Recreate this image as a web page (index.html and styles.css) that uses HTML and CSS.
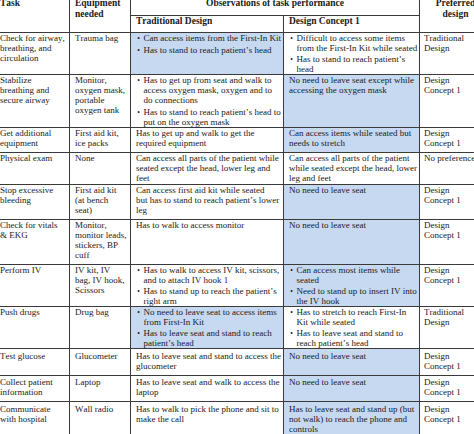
FILE: index.html
```html
<!DOCTYPE html>
<html lang="en">
<head>
<meta charset="utf-8">
<title>Observations of task performance</title>
<link rel="stylesheet" href="styles.css">
</head>
<body>
<div class="obs" role="table">
  <div class="row head-top" role="row">
    <div class="cell th span-rows" role="columnheader">Task</div>
    <div class="cell th span-rows" role="columnheader">Equipment needed</div>
    <div class="cell th span-cols center" role="columnheader">Observations of task performance</div>
    <div class="cell th span-rows pref center" role="columnheader">Preferred design</div>
  </div>
  <div class="row head-sub" role="row">
    <div class="cell th trad" role="columnheader">Traditional Design</div>
    <div class="cell th concept" role="columnheader">Design Concept 1</div>
  </div>

  <div class="row" role="row">
    <div class="cell">Check for airway, breathing, and circulation</div>
    <div class="cell">Trauma bag</div>
    <div class="cell list hl"><ul><li>Can access items from the First-In Kit</li><li>Has to stand to reach patient’s head</li></ul></div>
    <div class="cell list"><ul><li>Difficult to access some items from the First-In Kit while seated</li><li>Has to stand to reach patient’s head</li></ul></div>
    <div class="cell">Traditional Design</div>
  </div>
  <div class="row" role="row">
    <div class="cell">Stabilize breathing and secure airway</div>
    <div class="cell">Monitor, oxygen mask, portable oxygen tank</div>
    <div class="cell list"><ul><li>Has to get up from seat and walk to access oxygen mask, oxygen and to do connections</li><li>Has to stand to reach patient’s head to put on the oxygen mask</li></ul></div>
    <div class="cell hl">No need to leave seat except while accessing the oxygen mask</div>
    <div class="cell">Design Concept 1</div>
  </div>
  <div class="row" role="row">
    <div class="cell">Get additional equipment</div>
    <div class="cell">First aid kit, ice packs</div>
    <div class="cell">Has to get up and walk to get the required equipment</div>
    <div class="cell hl">Can access items while seated but needs to stretch</div>
    <div class="cell">Design Concept 1</div>
  </div>
  <div class="row tight" role="row">
    <div class="cell">Physical exam</div>
    <div class="cell">None</div>
    <div class="cell">Can access all parts of the patient while seated except the head, lower leg and feet</div>
    <div class="cell">Can access all parts of the patient while seated except the head, lower leg and feet</div>
    <div class="cell">No preference</div>
  </div>
  <div class="row" role="row">
    <div class="cell">Stop excessive bleeding</div>
    <div class="cell">First aid kit (at bench seat)</div>
    <div class="cell">Can access first aid kit while seated<br>but has to stand to reach patient’s lower leg</div>
    <div class="cell hl">No need to leave seat</div>
    <div class="cell">Design Concept 1</div>
  </div>
  <div class="row" role="row">
    <div class="cell">Check for vitals &amp; EKG</div>
    <div class="cell">Monitor, monitor leads, stickers, BP cuff</div>
    <div class="cell">Has to walk to access monitor</div>
    <div class="cell hl">No need to leave seat</div>
    <div class="cell">Design Concept 1</div>
  </div>
  <div class="row" role="row">
    <div class="cell">Perform IV</div>
    <div class="cell">IV kit, IV bag, IV hook, Scissors</div>
    <div class="cell list"><ul><li>Has to walk to access IV kit, scissors, and to attach IV hook 1</li><li>Has to stand up to reach the patient’s right arm</li></ul></div>
    <div class="cell list hl"><ul><li>Can access most items while seated</li><li>Need to stand up to insert IV into the IV hook</li></ul></div>
    <div class="cell">Design Concept 1</div>
  </div>
  <div class="row" role="row">
    <div class="cell">Push drugs</div>
    <div class="cell">Drug bag</div>
    <div class="cell list hl"><ul><li>No need to leave seat to access items from First-In Kit</li><li>Has to leave seat and stand to reach patient’s head</li></ul></div>
    <div class="cell list"><ul><li>Has to stretch to reach First-In<br>Kit while seated</li><li>Has to leave seat and stand to reach patient’s head</li></ul></div>
    <div class="cell">Traditional Design</div>
  </div>
  <div class="row loose" role="row">
    <div class="cell">Test glucose</div>
    <div class="cell">Glucometer</div>
    <div class="cell">Has to leave seat and stand to access the glucometer</div>
    <div class="cell hl">No need to leave seat</div>
    <div class="cell">Design Concept 1</div>
  </div>
  <div class="row loose" role="row">
    <div class="cell">Collect patient information</div>
    <div class="cell">Laptop</div>
    <div class="cell">Has to leave seat and walk to access the laptop</div>
    <div class="cell hl">No need to leave seat</div>
    <div class="cell">Design Concept 1</div>
  </div>
  <div class="row loose" role="row">
    <div class="cell">Communicate with hospital</div>
    <div class="cell">Wall radio</div>
    <div class="cell">Has to walk to pick the phone and sit to make the call</div>
    <div class="cell hl">Has to leave seat and stand up (but not walk) to reach the phone and controls</div>
    <div class="cell">Design Concept 1</div>
  </div>
</div>
</body>
</html>
```
FILE: styles.css
```css
html, body {
  margin: 0;
  padding: 0;
  background: #ffffff;
}

body {
  width: 474px;
  height: 434px;
  overflow: hidden;
}

.obs {
  display: grid;
  grid-template-columns: 75px 61px 153px 136px 72px;
  width: max-content;
  margin: -3px 0 0 -6px;
  border-top: 1px solid #3a3a3a;
  border-left: 1px solid #3a3a3a;
  font-family: "Liberation Serif", "Times New Roman", serif;
  font-size: 9px;
  line-height: 10px;
  font-kerning: none;
  color: #1a1a1a;
}

.row {
  display: contents;
}

.cell {
  border-right: 1px solid #3a3a3a;
  border-bottom: 1px solid #3a3a3a;
  padding: 0 0 4px 5px;
  min-width: 0;
}

/* column insets */
.row > .cell:nth-child(1) { padding-right: 3.3px; }
.row > .cell:nth-child(2) { padding-right: 3px; }
.row > .cell:nth-child(3) { padding-right: 0; }
.row > .cell:nth-child(4) { padding-right: 0; }
.row > .cell:nth-child(5) { padding-left: 4px; padding-right: 13px; }

.row.tight > .cell { padding-bottom: 1px; }
.row.loose > .cell { padding-top: 1.5px; }

.cell.list { padding-bottom: 0; }

.cell.hl { background: #c6d9f1; }

/* header */
.th {
  font-weight: bold;
  font-size: 9.5px;
  line-height: 10.5px;
}

.head-top > .th { padding-bottom: 6.5px; }
.head-sub > .th { padding-bottom: 5.5px; padding-right: 0; }

.head-top > .span-rows { grid-row: span 2; }
.head-top > .span-cols { grid-column: span 2; padding-left: 0; padding-right: 0; }
.head-top > .th.pref { padding-left: 4px; padding-right: 4px; }

.center { text-align: center; }

/* bullet lists */
.cell ul {
  list-style: none;
  margin: 0;
  padding: 0;
}

.cell li {
  display: flex;
  align-items: baseline;
}

.cell li + li {
  margin-top: 1.3px;
}

.cell li::before {
  content: "•";
  flex: 0 0 7.5px;
  box-sizing: border-box;
  padding-left: 1.2px;
  font-size: 7.5px;
}
```
